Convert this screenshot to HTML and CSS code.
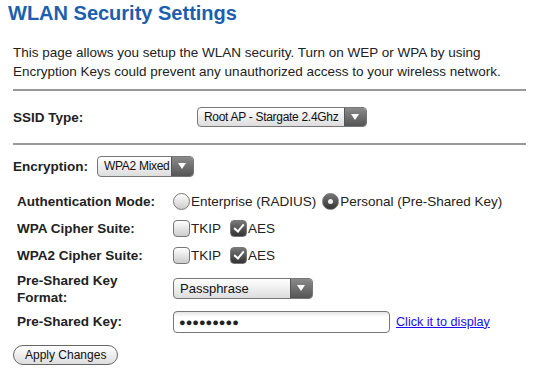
FILE: index.html
```html
<!DOCTYPE html>
<html lang="en">
<head>
    <meta charset="UTF-8">
    <title>WLAN Security Settings</title>
    <link rel="stylesheet" href="styles.css">
</head>
<body>

<h1 class="page-title">WLAN Security Settings</h1>

<div class="content">
    <p class="intro">This page allows you setup the WLAN security. Turn on WEP or WPA by using Encryption Keys could prevent any unauthorized access to your wireless network.</p>
    <hr>

    <div class="ssid-row">
        <span class="label">SSID Type:</span>
        <div class="select ssid-select">
            <span class="select-text">Root AP - Stargate 2.4Ghz</span>
            <span class="select-arrow"></span>
        </div>
    </div>
    <hr>

    <div class="enc-row">
        <span class="label">Encryption:</span>
        <div class="select enc-select">
            <span class="select-text">WPA2 Mixed</span>
            <span class="select-arrow"></span>
        </div>
    </div>

    <div class="form-grid">
        <div class="label">Authentication Mode:</div>
        <div class="field">
            <span class="radio"></span><span class="opt-text">Enterprise (RADIUS)</span>
            <span class="radio checked"></span><span class="opt-text">Personal (Pre-Shared Key)</span>
        </div>

        <div class="label">WPA Cipher Suite:</div>
        <div class="field">
            <span class="check"></span><span class="opt-text check-text">TKIP</span>
            <span class="check checked"></span><span class="opt-text check-text">AES</span>
        </div>

        <div class="label">WPA2 Cipher Suite:</div>
        <div class="field">
            <span class="check"></span><span class="opt-text check-text">TKIP</span>
            <span class="check checked"></span><span class="opt-text check-text">AES</span>
        </div>

        <div class="label">Pre-Shared Key<br>Format:</div>
        <div class="field">
            <div class="select psk-select">
                <span class="select-text">Passphrase</span>
                <span class="select-arrow"></span>
            </div>
        </div>

        <div class="label">Pre-Shared Key:</div>
        <div class="field">
            <div class="text-input">&#9679;&#9679;&#9679;&#9679;&#9679;&#9679;&#9679;&#9679;&#9679;</div>
            <a href="#" class="show-link">Click it to display</a>
        </div>
    </div>

    <button class="btn-apply">Apply Changes</button>
</div>

</body>
</html>
```

FILE: styles.css
```css
body { margin: 0; font-family: "Liberation Sans", Arial, sans-serif; font-size: 13.5px; color: #222; background: #fff; }

/* Header */
.page-title { margin: 0; padding: 1px 8px 0; font-size: 20px; font-weight: bold; color: #1b5fae; line-height: 24px; }

.content { padding: 0 13px; }
.intro { margin: 18px 0 0; line-height: 19px; }
hr { border: none; border-top: 2px solid #999; margin: 8px 0 0; width: 513px; }

.label { font-weight: bold; color: #222; }

/* Selects */
.select { display: flex; align-items: stretch; height: 18px; border: 1px solid #777; border-radius: 4px; background: linear-gradient(#fff, #ddd); overflow: hidden; }
.select-text { flex: 1; min-width: 0; overflow: hidden; padding: 0 5px 0 6px; line-height: 18px; font-size: 12px; letter-spacing: -0.3px; color: #111; white-space: nowrap; }
.select-arrow { flex: 0 0 21px; border-left: 1px solid #555; background: linear-gradient(#8a8a8a, #555); position: relative; }
.select-arrow::after { content: ""; position: absolute; left: 6px; top: 6px; border-left: 4px solid transparent; border-right: 4px solid transparent; border-top: 6px solid #fff; }

.ssid-row { display: flex; align-items: center; height: 36px; padding-top: 8px; }
.ssid-row .label { width: 184px; }
.ssid-select { width: 168px; }

.enc-row { display: flex; align-items: center; height: 43px; }
.enc-row .label { width: 84px; }
.enc-select { width: 95px; height: 19px; }
.enc-select .select-text { line-height: 19px; }

/* Form grid */
.form-grid { display: grid; grid-template-columns: 156px 1fr; grid-template-rows: 27px 27px 27px 39px 27px; padding-left: 4px; }
.form-grid .label { display: flex; align-items: center; line-height: 17px; }
.field { display: flex; align-items: center; }
.opt-text { margin-right: 6px; margin-left: 1px; }
.check-text { margin-right: 9px; }

.radio { width: 15px; height: 15px; border-radius: 50%; border: 1px solid #777; background: linear-gradient(#fff, #ccc); display: inline-block; position: relative; }
.radio.checked { background: linear-gradient(#777, #333); }
.radio.checked::after { content: ""; position: absolute; left: 5px; top: 5px; width: 5px; height: 5px; border-radius: 50%; background: #eee; }

.check { width: 15px; height: 15px; border-radius: 4px; border: 1px solid #777; background: linear-gradient(#fff, #ccc); display: inline-block; position: relative; }
.check.checked { background: linear-gradient(#777, #333); }
.check.checked::after { content: ""; position: absolute; left: 5px; top: 1px; width: 4px; height: 8px; border: solid #fff; border-width: 0 2px 2px 0; transform: rotate(40deg); }

.psk-select { width: 138px; height: 19px; }
.psk-select .select-text { font-size: 13px; letter-spacing: 0; line-height: 19px; }

.text-input { width: 205px; height: 20px; border: 1px solid #777; border-radius: 4px; padding: 0 5px; line-height: 20px; font-size: 11px; background: linear-gradient(#e6e6e6, #fff 25%); }
.show-link { margin-left: 6px; color: #1a0dee; text-decoration: underline; font-size: 12.6px; }

.btn-apply { display: block; margin-top: 10px; font-family: "Liberation Sans", Arial, sans-serif; font-size: 12px; color: #111; padding: 0 11px; height: 20px; border: 1px solid #666; border-radius: 10px; background: linear-gradient(#fff, #ddd); }
```
